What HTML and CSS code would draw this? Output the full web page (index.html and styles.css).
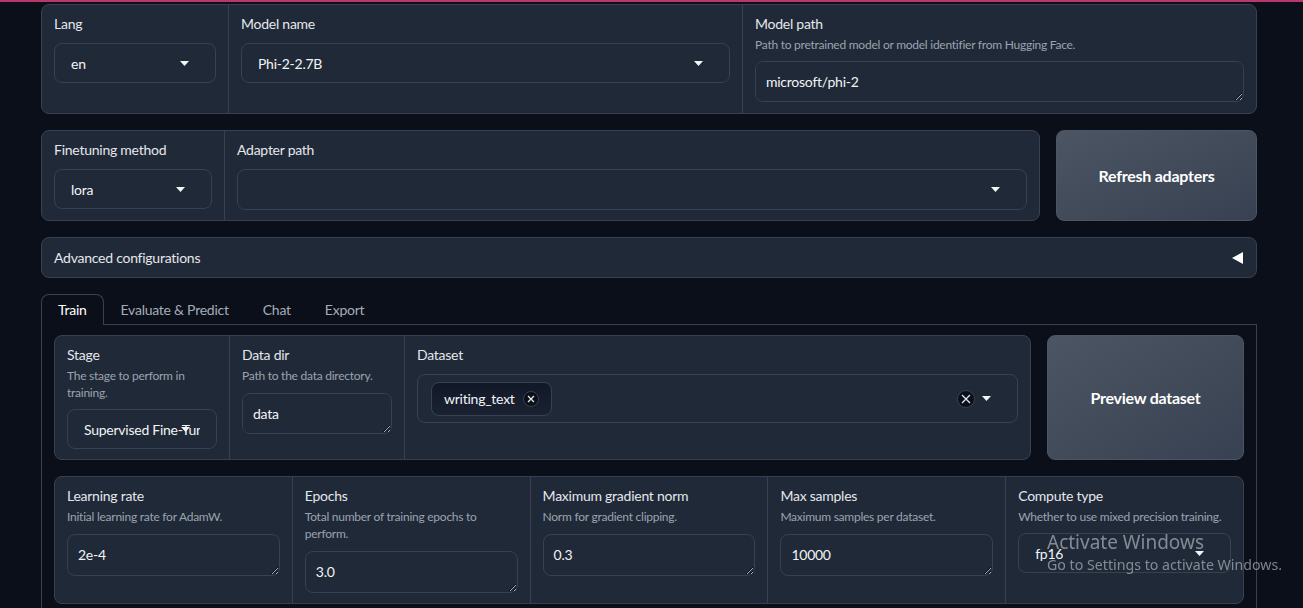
FILE: index.html
```html
<!DOCTYPE html>
<html lang="en">

<head>
    <meta charset="UTF-8">
    <title>LLaMA Board</title>
    <link rel="stylesheet" href="styles.css">
</head>

<body>
    <div class="topline"></div>

    <main class="app">
        <!-- model selection -->
        <section class="panel cols-model">
            <div class="field">
                <span class="label">Lang</span>
                <div class="select"><span class="value">en</span>
                    <svg class="caret" width="9" height="5" viewBox="0 0 9 5"><path d="M0 0h9L4.5 5z" /></svg>
                </div>
            </div>
            <div class="field">
                <span class="label">Model name</span>
                <div class="select"><span class="value">Phi-2-2.7B</span>
                    <svg class="caret" width="9" height="5" viewBox="0 0 9 5"><path d="M0 0h9L4.5 5z" /></svg>
                </div>
            </div>
            <div class="field">
                <span class="label">Model path</span>
                <span class="info">Path to pretrained model or model identifier from Hugging Face.</span>
                <textarea class="text" rows="1">microsoft/phi-2</textarea>
            </div>
        </section>

        <div class="row-btn">
            <section class="panel cols-adapter">
                <div class="field">
                    <span class="label">Finetuning method</span>
                    <div class="select"><span class="value">lora</span>
                        <svg class="caret" width="9" height="5" viewBox="0 0 9 5"><path d="M0 0h9L4.5 5z" /></svg>
                    </div>
                </div>
                <div class="field">
                    <span class="label">Adapter path</span>
                    <div class="select tall"><span class="value"></span>
                        <svg class="caret" width="9" height="5" viewBox="0 0 9 5"><path d="M0 0h9L4.5 5z" /></svg>
                    </div>
                </div>
            </section>
            <button class="btn">Refresh adapters</button>
        </div>

        <section class="accordion">
            <span>Advanced configurations</span>
            <svg width="11" height="12" viewBox="0 0 11 12"><path d="M11 0v12L0 6z" fill="#fff" /></svg>
        </section>

        <section class="tabs-wrap">
            <nav class="tabs">
                <span class="tab selected">Train</span>
                <span class="tab">Evaluate &amp; Predict</span>
                <span class="tab">Chat</span>
                <span class="tab">Export</span>
            </nav>

            <div class="tabpanel">
                <div class="row-btn inner">
                    <section class="panel cols-data">
                        <div class="field">
                            <span class="label">Stage</span>
                            <span class="info">The stage to perform in training.</span>
                            <div class="select"><span class="value">Supervised Fine-Tuning</span>
                                <svg class="caret" width="9" height="5" viewBox="0 0 9 5"><path d="M0 0h9L4.5 5z" /></svg>
                            </div>
                        </div>
                        <div class="field">
                            <span class="label">Data dir</span>
                            <span class="info">Path to the data directory.</span>
                            <textarea class="text" rows="1">data</textarea>
                        </div>
                        <div class="field">
                            <span class="label">Dataset</span>
                            <div class="multi">
                                <span class="token">writing_text
                                    <span class="x small">
                                        <svg width="8" height="8" viewBox="0 0 8 8"><path d="M1 1l6 6M7 1L1 7" /></svg>
                                    </span>
                                </span>
                                <span class="spacer"></span>
                                <span class="x big">
                                    <svg width="10" height="10" viewBox="0 0 10 10"><path d="M1 1l8 8M9 1L1 9" /></svg>
                                </span>
                                <svg class="caret" width="9" height="5" viewBox="0 0 9 5"><path d="M0 0h9L4.5 5z" /></svg>
                            </div>
                        </div>
                    </section>
                    <button class="btn">Preview dataset</button>
                </div>

                <section class="panel cols-train">
                    <div class="field">
                        <span class="label">Learning rate</span>
                        <span class="info">Initial learning rate for AdamW.</span>
                        <textarea class="text" rows="1">2e-4</textarea>
                    </div>
                    <div class="field">
                        <span class="label">Epochs</span>
                        <span class="info">Total number of training epochs to perform.</span>
                        <textarea class="text" rows="1">3.0</textarea>
                    </div>
                    <div class="field">
                        <span class="label">Maximum gradient norm</span>
                        <span class="info">Norm for gradient clipping.</span>
                        <textarea class="text" rows="1">0.3</textarea>
                    </div>
                    <div class="field">
                        <span class="label">Max samples</span>
                        <span class="info">Maximum samples per dataset.</span>
                        <textarea class="text" rows="1">10000</textarea>
                    </div>
                    <div class="field">
                        <span class="label">Compute type</span>
                        <span class="info">Whether to use mixed precision training.</span>
                        <div class="select"><span class="value">fp16</span>
                            <svg class="caret" width="9" height="5" viewBox="0 0 9 5"><path d="M0 0h9L4.5 5z" /></svg>
                        </div>
                    </div>
                </section>
            </div>
        </section>
    </main>

    <div class="watermark">
        <div class="wm-title">Activate Windows</div>
        <div class="wm-sub">Go to Settings to activate Windows.</div>
    </div>
</body>

</html>
```

FILE: styles.css
```css
body {
    margin: 0;
    background-color: #0b0f19;
    color: #e5e7eb;
    font-family: 'Lato', 'Liberation Sans', sans-serif;
    font-size: 14px;
    letter-spacing: -0.25px;
}

.topline {
    height: 2px;
    background-color: #b8386a;
}

.app {
    width: 1216px;
    margin-left: 41px;
    padding-top: 2px;
    display: flex;
    flex-direction: column;
    gap: 16px;
}

/* blocks: a bordered form whose columns are split by 1px lines */
.panel {
    display: grid;
    gap: 1px;
    background-color: #374151;
    border: 1px solid #374151;
    border-radius: 8px;
    overflow: hidden;
}

.cols-model {
    grid-template-columns: 186px 1fr 1fr;
}

.cols-model .field {
    padding-bottom: 11px;
}

.cols-adapter {
    grid-template-columns: 182px 1fr;
}

.cols-data {
    grid-template-columns: 174px 174px 1fr;
}

.cols-train {
    grid-template-columns: repeat(5, 1fr);
}

.field {
    background-color: #1f2937;
    padding: 9px 12px 10px;
    display: flex;
    flex-direction: column;
    min-width: 0;
}

.label {
    line-height: 20px;
    color: #e5e7eb;
}

.info {
    font-size: 12px;
    line-height: 17px;
    margin-top: 2px;
    color: #9ca3af;
}

.select,
.text,
.multi {
    margin-top: 9px;
    box-sizing: border-box;
    border: 1px solid #374151;
    border-radius: 8px;
    background-color: #1f2937;
    color: #f3f4f6;
}

.info + .select,
.cols-model .info + .text {
    margin-top: 8px;
}

.select {
    position: relative;
    height: 40px;
    padding: 0 16px;
    display: flex;
    align-items: center;
    overflow: hidden;
}

.select.tall {
    height: 41px;
}

.select .value {
    white-space: nowrap;
    overflow: hidden;
}

.caret {
    fill: #f3f4f6;
}

.select .caret {
    position: absolute;
    right: 26px;
    top: 17px;
}

.text {
    display: block;
    width: 100%;
    height: 41px;
    padding: 10px;
    font-family: inherit;
    font-size: 14px;
    letter-spacing: -0.25px;
    line-height: 20px;
    resize: vertical;
    outline: none;
    color-scheme: dark;
}

.cols-train .text {
    height: 42px;
}

.multi {
    height: 49px;
    padding: 0 26px 0 13px;
    display: flex;
    align-items: center;
}

.token {
    display: flex;
    align-items: center;
    gap: 8px;
    height: 34px;
    box-sizing: border-box;
    padding: 0 12px;
    border: 1px solid #374151;
    border-radius: 8px;
    background: linear-gradient(to bottom, #111827, #1a2232);
}

.spacer {
    flex: 1;
}

.x {
    display: flex;
    align-items: center;
    justify-content: center;
    border-radius: 50%;
    background-color: #0b0f19;
    border: 1px solid #374151;
    box-sizing: border-box;
}

.x svg {
    stroke: #e5e7eb;
    stroke-width: 1.3;
}

.x.small {
    width: 16px;
    height: 16px;
}

.x.big {
    width: 18px;
    height: 18px;
    margin-right: 7px;
}

.row-btn {
    display: grid;
    grid-template-columns: 1fr 201px;
    gap: 16px;
}

.row-btn.inner {
    grid-template-columns: 1fr 197px;
    gap: 16px;
    margin-bottom: 16px;
}

.btn {
    border: 1px solid #4b5563;
    border-radius: 8px;
    background: linear-gradient(to bottom right, #4b5563, #374151);
    color: #ffffff;
    font-family: inherit;
    font-size: 16px;
    font-weight: 700;
    letter-spacing: -0.25px;
}

.accordion {
    height: 41px;
    box-sizing: border-box;
    padding: 0 13px 0 12px;
    display: flex;
    align-items: center;
    justify-content: space-between;
    border: 1px solid #374151;
    border-radius: 8px;
    background-color: #1f2937;
}

/* tabs */
.tabs {
    display: flex;
    border-bottom: 1px solid #374151;
}

.tab {
    height: 29px;
    line-height: 29px;
    padding: 0 16px;
    border: 1px solid transparent;
    border-bottom: none;
    border-radius: 8px 8px 0 0;
    color: #a5acb8;
}

.tab.selected {
    height: 30px;
    margin-bottom: -1px;
    border-color: #374151;
    background-color: #0b0f19;
    color: #ffffff;
}

.tabpanel {
    border: 1px solid #374151;
    border-top: none;
    padding: 10px 12px 12px;
}

/* os overlay */
.watermark {
    position: fixed;
    left: 1047px;
    top: 529px;
    font-family: 'Noto Sans', 'Open Sans', sans-serif;
    letter-spacing: 0;
    color: rgba(200, 204, 210, 0.6);
    pointer-events: none;
}

.wm-title {
    font-size: 19px;
    line-height: 26px;
}

.wm-sub {
    font-size: 14.2px;
    line-height: 20px;
}
```
